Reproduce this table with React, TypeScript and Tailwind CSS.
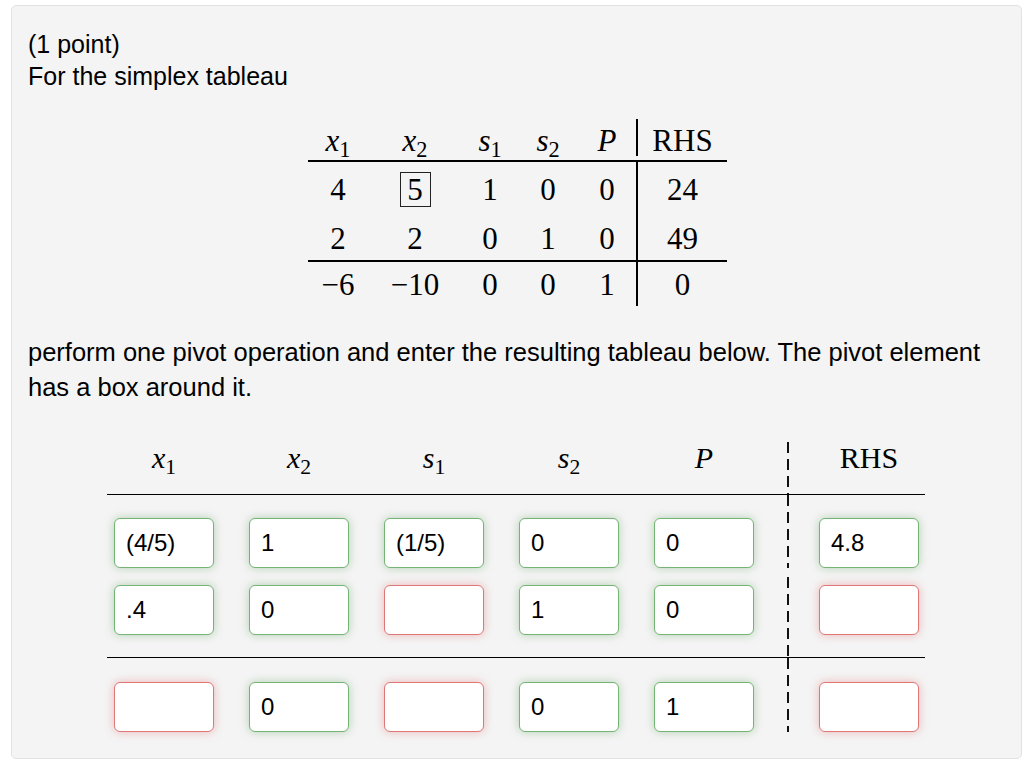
import React from "react";

type Cell = { v: string; ok: boolean };

const ROWS: Cell[][] = [
  [
    { v: "(4/5)", ok: true },
    { v: "1", ok: true },
    { v: "(1/5)", ok: true },
    { v: "0", ok: true },
    { v: "0", ok: true },
    { v: "4.8", ok: true },
  ],
  [
    { v: ".4", ok: true },
    { v: "0", ok: true },
    { v: "", ok: false },
    { v: "1", ok: true },
    { v: "0", ok: true },
    { v: "", ok: false },
  ],
  [
    { v: "", ok: false },
    { v: "0", ok: true },
    { v: "", ok: false },
    { v: "0", ok: true },
    { v: "1", ok: true },
    { v: "", ok: false },
  ],
];

const TOP_ROWS = [
  ["4", "5", "1", "0", "0", "24"],
  ["2", "2", "0", "1", "0", "49"],
  ["\u22126", "\u221210", "0", "0", "1", "0"],
];

// ── Math var ──────────────────────────────────────────────────────────────────
function Var({ n, sub }: { n: string; sub?: string }) {
  return (
    <span className="whitespace-nowrap">
      <span className="italic">{n}</span>
      {sub && <span className="relative top-[0.28em] text-[0.72em] not-italic">{sub}</span>}
    </span>
  );
}

const HEADERS = [
  <Var n="x" sub="1" />,
  <Var n="x" sub="2" />,
  <Var n="s" sub="1" />,
  <Var n="s" sub="2" />,
  <Var n="P" />,
];

// ── Answer box ────────────────────────────────────────────────────────────────
function AnswerBox({ cell }: { cell: Cell }) {
  return (
    <input
      readOnly
      value={cell.v}
      className={`w-[100px] h-[50px] rounded-[6px] bg-white border px-[11px] text-[24px] text-black focus:outline-none ${
        cell.ok
          ? "border-[#74b474] shadow-[0_0_10px_rgba(60,140,60,0.35)]"
          : "border-[#df7777] shadow-[0_0_10px_rgba(220,70,70,0.35)]"
      }`}
    />
  );
}

function DashSeg({ className = "" }: { className?: string }) {
  return (
    <div
      className={`w-[2px] self-stretch bg-[repeating-linear-gradient(to_bottom,#111_0_11px,transparent_11px_17px)] ${className}`}
    />
  );
}

// ── Main ──────────────────────────────────────────────────────────────────────
export default function App() {
  const topCols = ["w-[60px]", "w-[94px]", "w-[56px]", "w-[60px]", "w-[58px]"];

  return (
    <div className="w-[1034px] h-[772px] bg-white pt-[5px] pl-[11px] font-['Liberation_Sans',Arial,sans-serif] text-black">
      <div className="w-[1011px] h-[754px] bg-[#f4f4f4] border border-[#e2e2e2] rounded-[5px] px-[16px] pt-[22px]">
        <p className="text-[25px] leading-[32px]">(1 point)</p>
        <p className="text-[25px] leading-[32px]">For the simplex tableau</p>

        {/* given tableau */}
        <div className="mt-[28px] ml-[280px] flex font-['Liberation_Serif','Times_New_Roman',serif] text-[31px]">
          <div className="flex flex-col">
            {[HEADERS, ...TOP_ROWS].map((row, ri) => (
              <div
                key={ri}
                className={`flex ${ri === 0 || ri === 2 ? "border-b-2 border-black" : ""} ${
                  ri === 0 ? "h-[42px] items-end pb-[4px]" : ri === 1 ? "h-[54px] items-center" : ri === 2 ? "h-[46px] items-center" : "h-[44px] items-center"
                }`}
              >
                {topCols.map((w, ci) => (
                  <div key={ci} className={`${w} text-center leading-none`}>
                    {ri === 1 && ci === 1 ? (
                      <span className="inline-flex items-center justify-center w-[31px] h-[35px] border border-[#222]">
                        {row[ci]}
                      </span>
                    ) : (
                      row[ci]
                    )}
                  </div>
                ))}
                <div className={`w-[2px] self-stretch bg-black ${ri === 0 ? "-mt-[1px]" : ""}`} />
                <div className="w-[89px] text-center leading-none">{ri === 0 ? "RHS" : (row as string[])[5]}</div>
              </div>
            ))}
          </div>
        </div>

        <p className="mt-[29px] max-w-[970px] text-[25.5px] leading-[35px]">
          perform one pivot operation and enter the resulting tableau below. The pivot element has a box around it.
        </p>

        {/* answer tableau */}
        <div className="mt-[37px] ml-[79px] w-[818px] flex flex-col">
          <div className="flex h-[53px] border-b border-black font-['Liberation_Serif','Times_New_Roman',serif] text-[30px]">
            {HEADERS.map((h, i) => (
              <div key={i} className={`${i === 4 ? "w-[140px]" : "w-[135px]"} pl-[7px]`}>
                <div className="w-[100px] text-center leading-[32px]">{h}</div>
              </div>
            ))}
            <DashSeg />
            <div className="pl-[30px]">
              <div className="w-[100px] text-center leading-[32px]">RHS</div>
            </div>
          </div>

          {ROWS.map((row, ri) => (
            <div
              key={ri}
              className={`flex ${ri === 1 ? "border-b border-black" : ""} ${
                ri === 0 ? "pt-[23px] pb-[9px]" : ri === 1 ? "pt-[8px] pb-[22px]" : "pt-[24px]"
              }`}
            >
              {row.slice(0, 5).map((c, ci) => (
                <div key={ci} className={`${ci === 4 ? "w-[140px]" : "w-[135px]"} pl-[7px]`}>
                  <AnswerBox cell={c} />
                </div>
              ))}
              <DashSeg className={ri === 0 ? "-mt-[23px]" : ri === 1 ? "-mt-[8px] -mb-[22px]" : "-mt-[24px]"} />
              <div className="pl-[30px]">
                <AnswerBox cell={row[5]} />
              </div>
            </div>
          ))}
        </div>
      </div>
    </div>
  );
}
